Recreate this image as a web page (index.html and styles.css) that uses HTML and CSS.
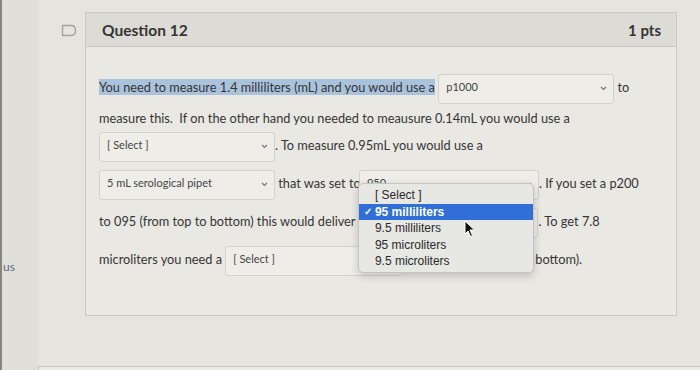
FILE: index.html
```html
<!DOCTYPE html>
<html lang="en">

<head>
    <meta charset="UTF-8">
    <meta name="viewport" content="width=device-width, initial-scale=1.0">
    <title>Quiz - Question 12</title>
    <link rel="stylesheet" href="styles.css">
</head>

<body>
    <div class="page">
        <aside class="rail">
            <a class="rail-link" href="#">Previous</a>
        </aside>

        <main class="main">
            <div class="question-row">
                <div class="flag">
                    <svg width="16" height="13" viewBox="0 0 16 13">
                        <path d="M1.5 1.5 H10 Q14.5 1.5 14.5 6.5 Q14.5 11.5 10 11.5 H1.5 Z" fill="none" stroke="#a3a29d" stroke-width="1.4" stroke-linejoin="round" />
                    </svg>
                </div>

                <section class="question">
                    <header class="question-header">
                        <h2>Question 12</h2>
                        <span class="points">1 pts</span>
                    </header>

                    <div class="question-body">
                        <p class="question-text">
                            <span class="selected-text">You need to measure 1.4 milliliters (mL) and you would use a</span>
                            <span class="select wide">p1000<svg class="chevron" width="7" height="5" viewBox="0 0 7 5"><path d="M1 1 L3.5 3.5 L6 1" fill="none" stroke="#777" stroke-width="1.2" /></svg></span>
                            to measure this.&nbsp; If on the other hand you needed to meausure 0.14mL you would use a
                            <span class="select">[ Select ]<svg class="chevron" width="7" height="5" viewBox="0 0 7 5"><path d="M1 1 L3.5 3.5 L6 1" fill="none" stroke="#777" stroke-width="1.2" /></svg></span>. To measure 0.95mL you would use a
                            <span class="select">5 mL serological pipet<svg class="chevron" width="7" height="5" viewBox="0 0 7 5"><path d="M1 1 L3.5 3.5 L6 1" fill="none" stroke="#777" stroke-width="1.2" /></svg></span>
                            that was set to
                            <span class="select wider open">950<svg class="chevron" width="7" height="5" viewBox="0 0 7 5"><path d="M1 1 L3.5 3.5 L6 1" fill="none" stroke="#777" stroke-width="1.2" /></svg>
                                <span class="menu">
                                    <span class="option">[ Select ]</span>
                                    <span class="option active"><span class="check">&#10003;</span>95 milliliters</span>
                                    <span class="option">9.5 milliliters</span>
                                    <span class="option">95 microliters</span>
                                    <span class="option">9.5 microliters</span>
                                </span>
                                <svg class="cursor" width="12" height="18" viewBox="0 0 12 18">
                                    <path d="M1 1 L1 14 L4 11 L6.5 16.5 L8.5 15.5 L6 10 L10.5 10 Z" fill="#111" stroke="#fff" stroke-width="1" stroke-linejoin="round" />
                                </svg>
                            </span>. If you set a p200
                            to 095 (from top to bottom) this would deliver
                            <span class="select wider">[ Select ]<svg class="chevron" width="7" height="5" viewBox="0 0 7 5"><path d="M1 1 L3.5 3.5 L6 1" fill="none" stroke="#777" stroke-width="1.2" /></svg></span>. To get 7.8
                            microliters you need a
                            <span class="select">[ Select ]<svg class="chevron" width="7" height="5" viewBox="0 0 7 5"><path d="M1 1 L3.5 3.5 L6 1" fill="none" stroke="#777" stroke-width="1.2" /></svg></span>
                            set to 078 (from top to bottom).
                        </p>
                    </div>
                </section>
            </div>

            <section class="question next"></section>
        </main>
    </div>
</body>

</html>
```

FILE: styles.css
```css
body {
    margin: 0;
    font-family: Lato, "Liberation Sans", sans-serif;
    background-color: #e5e4de;
    color: #353535;
    height: 370px;
    overflow: hidden;
}

.page {
    display: flex;
    height: 100%;
}

.rail {
    width: 38px;
    flex-shrink: 0;
    border-left: 2px solid #86857f;
    background-color: #e0dfd9;
    overflow: hidden;
    padding-top: 259px;
    box-sizing: border-box;
}

.rail-link {
    display: block;
    width: 12px;
    margin-left: 1px;
    direction: rtl;
    overflow: hidden;
    white-space: nowrap;
    font-size: 12px;
    color: #5b6b8c;
    text-decoration: none;
}

.main {
    flex: 1;
    padding-top: 12px;
}

.question-row {
    display: flex;
    align-items: flex-start;
    padding-left: 23px;
}

.flag {
    width: 24px;
    padding-top: 9px;
}

.question {
    width: 590px;
    border: 1px solid #c9c8c2;
    background-color: #e9e8e3;
}

.question-header {
    display: flex;
    justify-content: space-between;
    align-items: center;
    height: 33px;
    padding: 0 15px 0 16px;
    background-color: #dcdbd5;
    border-bottom: 1px solid #c9c8c2;
}

.question-header h2 {
    margin: 0;
    font-size: 15.5px;
    font-weight: bold;
}

.points {
    font-size: 15px;
    font-weight: bold;
}

.question-body {
    height: 245px;
    padding: 23px 27px 0 13px;
}

.question-text {
    margin: 0;
    font-size: 12.75px;
    line-height: 20px;
}

.selected-text {
    background-color: #a9c3dc;
}

.select {
    position: relative;
    display: inline-flex;
    justify-content: space-between;
    box-sizing: border-box;
    width: 176px;
    height: 30px;
    margin: 4px 0;
    padding: 5px 6px 0 7px;
    vertical-align: middle;
    background-color: #eeede8;
    border: 1px solid #d2d1cb;
    border-radius: 3px;
    font-size: 11px;
    line-height: 14px;
    color: #444;
}

.select.wider {
    width: 180px;
}

.select.open {
    margin-left: -5px;
}

.chevron {
    margin-top: 6px;
}

.menu {
    position: absolute;
    left: -2px;
    top: 12px;
    z-index: 2;
    display: block;
    width: 174px;
    padding: 3px 0 2px;
    background-color: #e7e7e3;
    border: 1px solid #c4c4c0;
    border-radius: 5px;
    box-shadow: 0 3px 8px rgba(0, 0, 0, 0.18);
    font-family: "Liberation Sans", sans-serif;
    font-size: 12px;
    line-height: 16.5px;
    color: #2a2a2a;
}

.option {
    position: relative;
    display: block;
    padding-left: 16px;
}

.option.active {
    background-color: #2f6fd7;
    color: #fff;
    font-weight: bold;
}

.check {
    position: absolute;
    left: 5px;
    font-size: 10px;
}

.cursor {
    position: absolute;
    left: 104px;
    top: 49px;
    z-index: 3;
}

.next {
    width: auto;
    height: 20px;
    margin-top: 50px;
    margin-right: -2px;
    background-color: #ebeae5;
    border-color: #c4c3bd;
}
```
